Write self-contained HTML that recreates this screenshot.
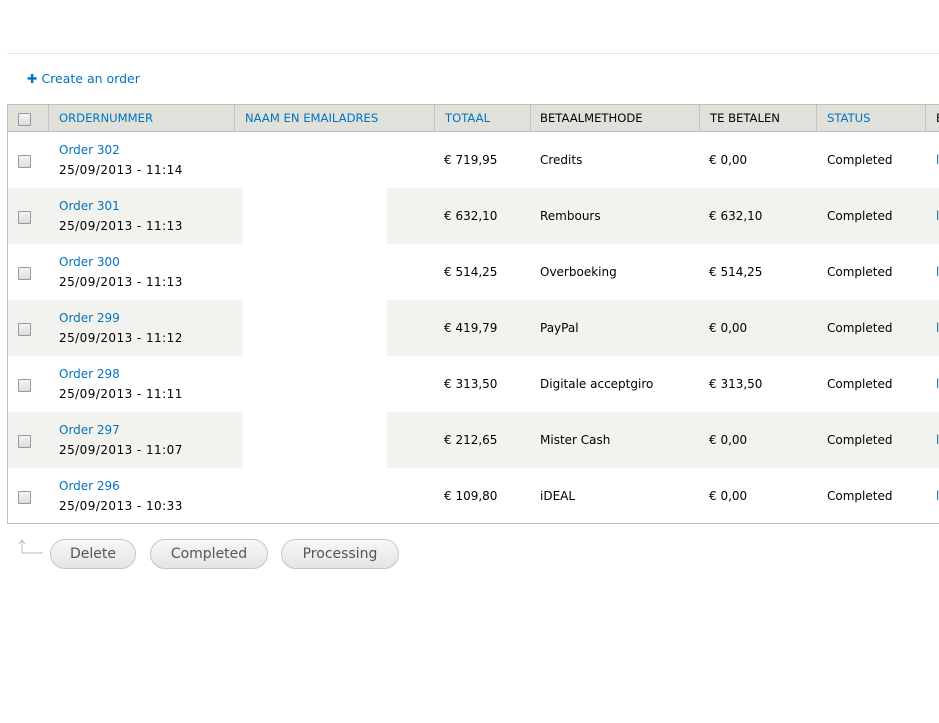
<!DOCTYPE html>
<html><head><meta charset="utf-8"><style>
body{margin:0;width:939px;height:723px;background:#fff;position:relative;overflow:hidden;font-family:"DejaVu Sans","Liberation Sans",sans-serif;font-size:12px;color:#000}
.a{position:absolute;white-space:nowrap}
.blue{color:#0074bd}
.d{letter-spacing:0.45px}
.h{font-size:11.6px}
.cb{position:absolute;width:11px;height:11px;border:1px solid #999;background:linear-gradient(#f4f4f4,#ddd);border-radius:1px}
.btn{position:absolute;top:539px;height:28px;border:1px solid #c6c6c6;border-radius:15px;background:linear-gradient(#f7f7f7,#e4e4e4);color:#555;font-size:14px;line-height:28px;text-align:center}
.vl{position:absolute;top:105px;height:26px;width:1px;background:#c4c4c0}
</style></head><body>
<div class="a" style="left:7px;top:53px;width:932px;height:1px;background:#e2e2e2"></div>
<div class="a blue" style="left:27px;top:71px;font-size:12.5px"><span style="font-weight:bold">✚</span> Create an order</div>

<div class="a" style="left:7px;top:104px;width:940px;height:420px;border:1px solid #bfbfbf;box-sizing:border-box"></div>
<div class="a" style="left:8px;top:105px;width:931px;height:26px;background:#e1e1dc;border-bottom:1px solid #bfbfbf"></div>
<div class="vl" style="left:48px"></div><div class="vl" style="left:234px"></div><div class="vl" style="left:434px"></div><div class="vl" style="left:530px"></div><div class="vl" style="left:699px"></div><div class="vl" style="left:816px"></div><div class="vl" style="left:925px"></div>
<div class="cb" style="left:18px;top:113px"></div>
<div class="a blue h" style="left:59px;top:111px">ORDERNUMMER</div>
<div class="a blue h" style="left:245px;top:111px">NAAM EN EMAILADRES</div>
<div class="a blue h" style="left:445px;top:111px">TOTAAL</div>
<div class="a h" style="left:540px;top:111px">BETAALMETHODE</div>
<div class="a h" style="left:710px;top:111px">TE BETALEN</div>
<div class="a blue h" style="left:827px;top:111px">STATUS</div>
<div class="a h" style="left:936px;top:111px">B</div>

<div class="a" style="left:8px;top:188px;width:235px;height:56px;background:#f2f2ee"></div><div class="a" style="left:387px;top:188px;width:552px;height:56px;background:#f2f2ee"></div>
<div class="a" style="left:8px;top:300px;width:235px;height:56px;background:#f2f2ee"></div><div class="a" style="left:387px;top:300px;width:552px;height:56px;background:#f2f2ee"></div>
<div class="a" style="left:8px;top:412px;width:235px;height:56px;background:#f2f2ee"></div><div class="a" style="left:387px;top:412px;width:552px;height:56px;background:#f2f2ee"></div>

<div class="cb" style="left:18px;top:155px"></div><div class="a blue" style="left:59px;top:143px">Order 302</div><div class="a d" style="left:59px;top:163px">25/09/2013 - 11:14</div><div class="a" style="left:444px;top:153px">€ 719,95</div><div class="a" style="left:540px;top:153px">Credits</div><div class="a" style="left:709px;top:153px">€ 0,00</div><div class="a" style="left:827px;top:153px">Completed</div><div class="a blue" style="left:936px;top:153px">l</div>
<div class="cb" style="left:18px;top:211px"></div><div class="a blue" style="left:59px;top:199px">Order 301</div><div class="a d" style="left:59px;top:219px">25/09/2013 - 11:13</div><div class="a" style="left:444px;top:209px">€ 632,10</div><div class="a" style="left:540px;top:209px">Rembours</div><div class="a" style="left:709px;top:209px">€ 632,10</div><div class="a" style="left:827px;top:209px">Completed</div><div class="a blue" style="left:936px;top:209px">l</div>
<div class="cb" style="left:18px;top:267px"></div><div class="a blue" style="left:59px;top:255px">Order 300</div><div class="a d" style="left:59px;top:275px">25/09/2013 - 11:13</div><div class="a" style="left:444px;top:265px">€ 514,25</div><div class="a" style="left:540px;top:265px">Overboeking</div><div class="a" style="left:709px;top:265px">€ 514,25</div><div class="a" style="left:827px;top:265px">Completed</div><div class="a blue" style="left:936px;top:265px">l</div>
<div class="cb" style="left:18px;top:323px"></div><div class="a blue" style="left:59px;top:311px">Order 299</div><div class="a d" style="left:59px;top:331px">25/09/2013 - 11:12</div><div class="a" style="left:444px;top:321px">€ 419,79</div><div class="a" style="left:540px;top:321px">PayPal</div><div class="a" style="left:709px;top:321px">€ 0,00</div><div class="a" style="left:827px;top:321px">Completed</div><div class="a blue" style="left:936px;top:321px">l</div>
<div class="cb" style="left:18px;top:379px"></div><div class="a blue" style="left:59px;top:367px">Order 298</div><div class="a d" style="left:59px;top:387px">25/09/2013 - 11:11</div><div class="a" style="left:444px;top:377px">€ 313,50</div><div class="a" style="left:540px;top:377px">Digitale acceptgiro</div><div class="a" style="left:709px;top:377px">€ 313,50</div><div class="a" style="left:827px;top:377px">Completed</div><div class="a blue" style="left:936px;top:377px">l</div>
<div class="cb" style="left:18px;top:435px"></div><div class="a blue" style="left:59px;top:423px">Order 297</div><div class="a d" style="left:59px;top:443px">25/09/2013 - 11:07</div><div class="a" style="left:444px;top:433px">€ 212,65</div><div class="a" style="left:540px;top:433px">Mister Cash</div><div class="a" style="left:709px;top:433px">€ 0,00</div><div class="a" style="left:827px;top:433px">Completed</div><div class="a blue" style="left:936px;top:433px">l</div>
<div class="cb" style="left:18px;top:491px"></div><div class="a blue" style="left:59px;top:479px">Order 296</div><div class="a d" style="left:59px;top:499px">25/09/2013 - 10:33</div><div class="a" style="left:444px;top:489px">€ 109,80</div><div class="a" style="left:540px;top:489px">iDEAL</div><div class="a" style="left:709px;top:489px">€ 0,00</div><div class="a" style="left:827px;top:489px">Completed</div><div class="a blue" style="left:936px;top:489px">l</div>

<svg class="a" style="left:18px;top:538px" width="26" height="20"><path d="M4 3 V15 H25" stroke="#bbb" fill="none"/><path d="M1 6 L4 2 L7 6" stroke="#bbb" fill="none"/></svg>
<div class="btn" style="left:50px;width:84px">Delete</div>
<div class="btn" style="left:150px;width:116px">Completed</div>
<div class="btn" style="left:281px;width:116px">Processing</div>
</body></html>
